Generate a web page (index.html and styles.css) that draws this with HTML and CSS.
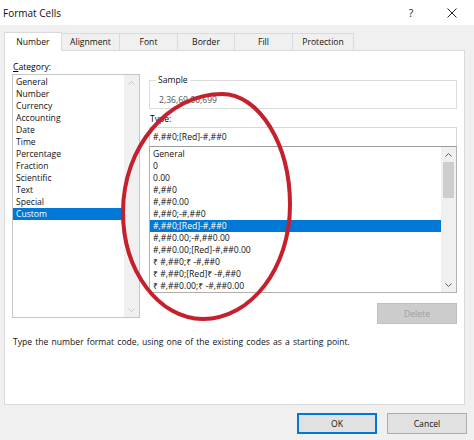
FILE: index.html
```html
<!DOCTYPE html>
<html>
<head>
<meta charset="utf-8">
<title>Format Cells</title>
<link rel="stylesheet" href="styles.css">
</head>
<body>
<div class="window">
  <div class="titlebar">
    <span class="title">Format Cells</span>
    <span class="ctrl help">?</span>
    <span class="ctrl close"><svg width="10" height="10" viewBox="0 0 10 10"><path d="M0.5 0.5L9.5 9.5M9.5 0.5L0.5 9.5" stroke="#222" stroke-width="1" fill="none"/></svg></span>
  </div>
  <div class="dialog">
    <div class="tabs">
      <div class="tab active w58">Number</div>
      <div class="tab w59">Alignment</div>
      <div class="tab w59">Font</div>
      <div class="tab w58">Border</div>
      <div class="tab w59">Fill</div>
      <div class="tab w62">Protection</div>
    </div>
    <div class="panel">
      <div class="top">
        <div class="cat-col">
          <div class="label cat-label"><u>C</u>ategory:</div>
          <div class="listbox cat-list">
            <div class="items">
              <div class="item">General</div>
              <div class="item">Number</div>
              <div class="item">Currency</div>
              <div class="item">Accounting</div>
              <div class="item">Date</div>
              <div class="item">Time</div>
              <div class="item">Percentage</div>
              <div class="item">Fraction</div>
              <div class="item">Scientific</div>
              <div class="item">Text</div>
              <div class="item">Special</div>
              <div class="item selected">Custom</div>
            </div>
            <div class="scrollbar disabled">
              <div class="arrow"><svg width="7" height="4" viewBox="0 0 7 4"><polyline points="0.5,3.5 3.5,0.5 6.5,3.5"/></svg></div>
              <div class="track"></div>
              <div class="arrow"><svg width="7" height="4" viewBox="0 0 7 4"><polyline points="0.5,0.5 3.5,3.5 6.5,0.5"/></svg></div>
            </div>
          </div>
        </div>
        <div class="right-col">
          <fieldset class="sample">
            <legend>Sample</legend>
            <div class="sample-value">2,36,69,00,699</div>
          </fieldset>
          <div class="label type-label">Type:</div>
          <div class="type-input">#,##0;[Red]-#,##0</div>
          <div class="listbox type-list">
            <div class="items">
              <div class="item">General</div>
              <div class="item">0</div>
              <div class="item">0.00</div>
              <div class="item">#,##0</div>
              <div class="item">#,##0.00</div>
              <div class="item">#,##0;-#,##0</div>
              <div class="item selected">#,##0;[Red]-#,##0</div>
              <div class="item">#,##0.00;-#,##0.00</div>
              <div class="item">#,##0.00;[Red]-#,##0.00</div>
              <div class="item">₹ #,##0;₹ -#,##0</div>
              <div class="item">₹ #,##0;[Red]₹ -#,##0</div>
              <div class="item">₹ #,##0.00;₹ -#,##0.00</div>
            </div>
            <div class="scrollbar">
              <div class="arrow"><svg width="7" height="4" viewBox="0 0 7 4"><polyline points="0.5,3.5 3.5,0.5 6.5,3.5"/></svg></div>
              <div class="track"><div class="thumb"></div></div>
              <div class="arrow"><svg width="7" height="4" viewBox="0 0 7 4"><polyline points="0.5,0.5 3.5,3.5 6.5,0.5"/></svg></div>
            </div>
          </div>
          <div class="delete-row"><button class="btn btn-disabled" disabled>Delete</button></div>
        </div>
      </div>
      <p class="desc">Type the number format code, using one of the existing codes as a starting point.</p>
    </div>
    <div class="footer">
      <button class="btn btn-default">OK</button>
      <button class="btn">Cancel</button>
    </div>
  </div>
  <svg class="annotation" width="474" height="440" viewBox="0 0 474 440">
    <path d="M222 94 C259 94 290 144 290 205 C290 268 251 319 203 319 C159 319 123 271 123 212 C123 147 168 94 222 94 Z" fill="none" stroke="#c5202e" stroke-width="4"/>
  </svg>
</div>
</body>
</html>
```

FILE: styles.css
```css
* {
  box-sizing: border-box;
}

html, body {
  margin: 0;
  padding: 0;
}

body {
  width: 474px;
  height: 440px;
  overflow: hidden;
  background: #f0f0f0;
  color: #000;
  font-family: "Open Sans", "Noto Sans", "DejaVu Sans", sans-serif;
  font-size: 8.6px;
}

.window {
  position: relative;
  width: 474px;
  height: 440px;
  display: flex;
  flex-direction: column;
}

/* Title bar */
.titlebar {
  height: 25px;
  background: #fff;
  display: flex;
  align-items: center;
  padding-left: 3px;
  padding-right: 12px;
}

.title {
  flex: 1;
  font-size: 10px;
  color: #111;
}

.ctrl {
  width: 20px;
  display: flex;
  justify-content: center;
  align-items: center;
  font-size: 10.5px;
  color: #222;
}

.help {
  margin-right: 21px;
}

/* Dialog body */
.dialog {
  flex: 1;
  display: flex;
  flex-direction: column;
  padding: 7px 9px 0 4px;
}

.tabs {
  position: relative;
  z-index: 1;
  display: flex;
  align-items: flex-end;
  height: 18px;
}

.tab {
  height: 17px;
  line-height: 16px;
  text-align: center;
  background: #f0f0f0;
  border: 1px solid #dadada;
  border-bottom: none;
  margin-left: -1px;
  color: #111;
}

.tab:first-child {
  margin-left: 0;
}

.tab.active {
  height: 19px;
  margin-bottom: -1px;
  padding-top: 1px;
  background: #fff;
}

.w58 { width: 58px; }
.w59 { width: 59px; }
.w62 { width: 62px; }

.panel {
  height: 355px;
  background: #fff;
  border: 1px solid #dadada;
  padding: 10px 7px 0 7px;
}

.top {
  display: grid;
  grid-template-columns: 128px 308px;
  column-gap: 9px;
  align-items: start;
}

.label {
  height: 12px;
  line-height: 12px;
  padding-left: 1px;
}

.cat-label {
  margin-bottom: 1px;
}

/* List boxes */
.listbox {
  display: flex;
  border: 1px solid #c6c6c6;
  background: #fff;
}

.cat-list {
  height: 244px;
}

.items {
  flex: 1;
  padding-top: 1px;
  min-width: 0;
}

.item {
  height: 12px;
  line-height: 12px;
  padding-left: 3px;
  white-space: nowrap;
  color: #111;
}

.item.selected {
  background: #0078d7;
  color: #fff;
}

.scrollbar {
  width: 15px;
  display: flex;
  flex-direction: column;
  background: #f0f0f0;
}

.arrow {
  height: 15px;
  display: flex;
  align-items: center;
  justify-content: center;
}

.arrow svg polyline {
  fill: none;
  stroke: #606060;
  stroke-width: 1;
}

.scrollbar.disabled .arrow svg polyline {
  stroke: #c4c4c4;
}

.track {
  flex: 1;
  padding: 0 2px;
}

.thumb {
  height: 36px;
  background: #cdcdcd;
}

/* Right column */
.right-col {
  padding-top: 13px;
  display: flex;
  flex-direction: column;
}

.sample {
  margin: 0;
  min-inline-size: 0;
  border: 1px solid #dcdcdc;
  padding: 8px 9px 2px 9px;
}

.sample legend {
  padding: 0 2px;
  margin-left: -3px;
  line-height: 12px;
  color: #111;
}

.sample-value {
  height: 12px;
  line-height: 12px;
  color: #555;
}

.type-label {
  margin-top: 4px;
  margin-bottom: 2px;
}

.type-input {
  height: 19px;
  line-height: 19px;
  padding-left: 3px;
  border: 1px solid #d6d6d6;
  border-bottom: none;
  color: #111;
}

.type-list {
  height: 147px;
  border-color: #b0b0b0;
  border-top-color: #9c9c9c;
}

.delete-row {
  display: flex;
  justify-content: flex-end;
  margin-top: 10px;
}

/* Buttons */
.btn {
  width: 80px;
  height: 21px;
  padding: 0;
  font-family: inherit;
  font-size: 8.6px;
  color: #111;
  background: #e1e1e1;
  border: 1px solid #adadad;
}

.btn-disabled {
  background: #cccccc;
  border-color: #bfbfbf;
  color: #a0a0a0;
}

.btn-default {
  border: 2px solid #0078d7;
}

.desc {
  margin: 12px 0 0 0;
  padding-left: 1px;
  line-height: 12px;
  word-spacing: 0.9px;
  color: #111;
}

.footer {
  display: flex;
  justify-content: flex-end;
  gap: 10px;
  padding-top: 8px;
  margin-right: -2px;
}

/* Hand-drawn annotation overlay */
.annotation {
  position: absolute;
  left: 0;
  top: 0;
  pointer-events: none;
}
```
